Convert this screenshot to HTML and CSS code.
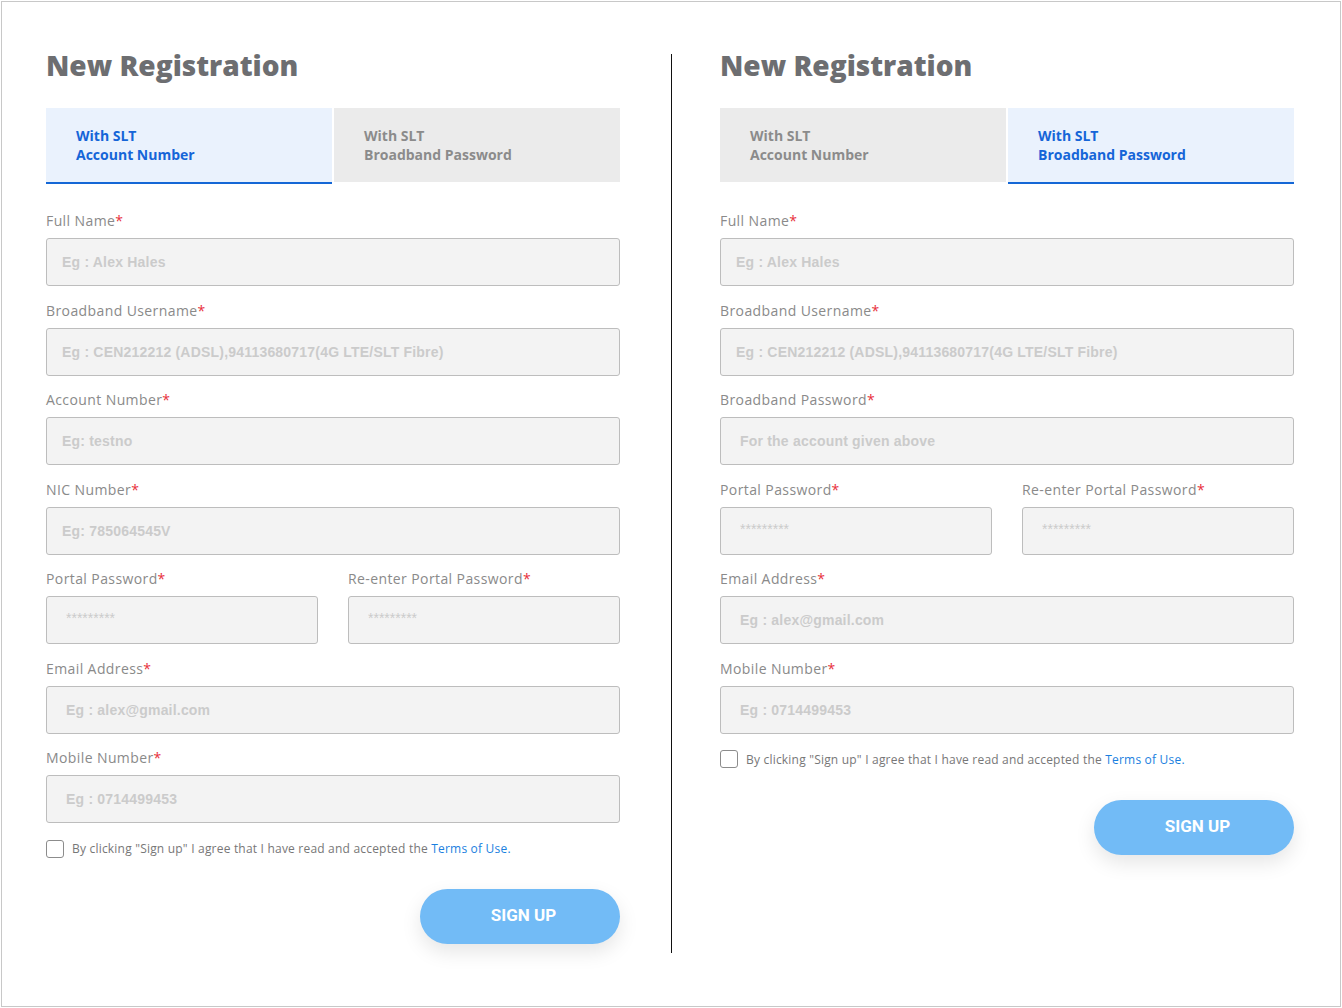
FILE: index.html
```html
<!DOCTYPE html>
<html>
<head>
<meta charset="utf-8">
<link rel="stylesheet" href="styles.css">
</head>
<body>
<div class="frame">
  <div class="cols">
    <section class="col">
      <h1 class="title">New Registration</h1>
      <div class="tabs">
        <div class="tab active">With SLT<br>Account Number</div>
        <div class="tab">With SLT<br>Broadband Password</div>
      </div>
      <div class="fields">
        <div class="field">
          <label class="lbl">Full Name<span class="req">*</span></label>
          <input class="inp" placeholder="Eg : Alex Hales">
        </div>
        <div class="field">
          <label class="lbl">Broadband Username<span class="req">*</span></label>
          <input class="inp" placeholder="Eg : CEN212212 (ADSL),94113680717(4G LTE/SLT Fibre)">
        </div>
        <div class="field">
          <label class="lbl">Account Number<span class="req">*</span></label>
          <input class="inp" placeholder="Eg: testno">
        </div>
        <div class="field">
          <label class="lbl">NIC Number<span class="req">*</span></label>
          <input class="inp" placeholder="Eg: 785064545V">
        </div>
        <div class="field row2">
          <div class="sub">
            <label class="lbl">Portal Password<span class="req">*</span></label>
            <input class="inp pw" placeholder="*********">
          </div>
          <div class="sub">
            <label class="lbl">Re-enter Portal Password<span class="req">*</span></label>
            <input class="inp pw" placeholder="*********">
          </div>
        </div>
        <div class="field">
          <label class="lbl">Email Address<span class="req">*</span></label>
          <input class="inp wide" placeholder="Eg : alex@gmail.com">
        </div>
        <div class="field">
          <label class="lbl">Mobile Number<span class="req">*</span></label>
          <input class="inp wide" placeholder="Eg : 0714499453">
        </div>
      </div>
      <div class="agree">
        <span class="box"></span>
        <span class="agree-text">By clicking "Sign up" I agree that I have read and accepted the <a class="terms">Terms of Use.</a></span>
      </div>
      <div class="actions">
        <button class="btn">SIGN UP</button>
      </div>
    </section>

    <div class="divider"></div>

    <section class="col">
      <h1 class="title">New Registration</h1>
      <div class="tabs">
        <div class="tab">With SLT<br>Account Number</div>
        <div class="tab active">With SLT<br>Broadband Password</div>
      </div>
      <div class="fields">
        <div class="field">
          <label class="lbl">Full Name<span class="req">*</span></label>
          <input class="inp" placeholder="Eg : Alex Hales">
        </div>
        <div class="field">
          <label class="lbl">Broadband Username<span class="req">*</span></label>
          <input class="inp" placeholder="Eg : CEN212212 (ADSL),94113680717(4G LTE/SLT Fibre)">
        </div>
        <div class="field">
          <label class="lbl">Broadband Password<span class="req">*</span></label>
          <input class="inp wide" placeholder="For the account given above">
        </div>
        <div class="field row2">
          <div class="sub">
            <label class="lbl">Portal Password<span class="req">*</span></label>
            <input class="inp pw" placeholder="*********">
          </div>
          <div class="sub">
            <label class="lbl">Re-enter Portal Password<span class="req">*</span></label>
            <input class="inp pw" placeholder="*********">
          </div>
        </div>
        <div class="field">
          <label class="lbl">Email Address<span class="req">*</span></label>
          <input class="inp wide" placeholder="Eg : alex@gmail.com">
        </div>
        <div class="field">
          <label class="lbl">Mobile Number<span class="req">*</span></label>
          <input class="inp wide" placeholder="Eg : 0714499453">
        </div>
      </div>
      <div class="agree">
        <span class="box"></span>
        <span class="agree-text">By clicking "Sign up" I agree that I have read and accepted the <a class="terms">Terms of Use.</a></span>
      </div>
      <div class="actions">
        <button class="btn">SIGN UP</button>
      </div>
    </section>
  </div>
</div>
</body>
</html>
```

FILE: styles.css
```css
* { box-sizing: border-box; }
html, body { margin: 0; padding: 0; background: #fff; }
body { font-family: "Open Sans", "Liberation Sans", sans-serif; }

.frame {
  margin: 1px;
  width: 1340px;
  height: 1006px;
  border: 1px solid #c8c8c8;
  overflow: hidden;
}

.cols {
  display: flex;
  align-items: flex-start;
  padding: 44px 0 0 44px;
}

.col {
  width: 574px;
  flex: none;
}

.divider {
  width: 1px;
  height: 899px;
  margin: 8px 48px 0 51px;
  background: #111;
  flex: none;
}

.title {
  margin: 0;
  font-size: 28px;
  line-height: 38px;
  font-weight: 800;
  color: #6d6e71;
}

.tabs {
  display: flex;
  gap: 2px;
  margin-top: 24px;
}

.tab {
  flex: 1;
  height: 76px;
  padding-left: 30px;
  display: flex;
  align-items: center;
  font-size: 14px;
  line-height: 19px;
  font-weight: 700;
  color: #8b8b8b;
  background: #ebebeb;
  border-bottom: 2px solid transparent;
  background-clip: padding-box;
}

.tab.active {
  background: #eaf2fd;
  color: #1565d8;
  border-bottom-color: #1467d6;
}

.fields {
  margin-top: 26px;
  display: flex;
  flex-direction: column;
  gap: 13.5px;
}

.field { display: flex; flex-direction: column; }

.row2 {
  flex-direction: row;
  gap: 30px;
}

.sub { flex: 1; display: flex; flex-direction: column; }

.lbl {
  font-size: 14px;
  line-height: 20px;
  letter-spacing: 0.4px;
  color: #8a8a8a;
  padding-top: 1px;
  margin-bottom: 7px;
}

.req { color: #e8303a; }

.inp {
  height: 48px;
  width: 100%;
  border: 1px solid #bdbdbd;
  border-radius: 3px;
  background: #f3f3f3;
  padding: 0 15px;
  font-family: "Liberation Sans", Arial, sans-serif;
  font-size: 14px;
  font-weight: 700;
  letter-spacing: 0.2px;
  color: #555;
  outline: none;
}

.inp::placeholder { color: #cbcbcb; }
.inp.wide { padding-left: 19px; }
.inp.pw { padding-left: 19px; font-size: 14px; font-weight: 400; letter-spacing: 0; padding-bottom: 4px; }

.agree {
  display: flex;
  align-items: center;
  margin-top: 16px;
}

.box {
  width: 18px;
  height: 18px;
  border: 1px solid #8c8c8c;
  border-radius: 3px;
  flex: none;
}

.agree-text {
  margin-left: 8px;
  font-size: 12px;
  line-height: 18px;
  letter-spacing: 0.2px;
  color: #777;
  padding-top: 1px;
}

.terms { color: #1a7fe0; text-decoration: none; }

.actions {
  display: flex;
  justify-content: flex-end;
  margin-top: 31px;
}

.btn {
  width: 200px;
  height: 55px;
  border: none;
  border-radius: 28px;
  background: #72bbf6;
  color: #fff;
  font-family: Roboto, "Liberation Sans", sans-serif;
  font-size: 17px;
  font-weight: 700;
  padding: 0 0 3px 7px;
  box-shadow: 0 8px 20px rgba(0, 0, 0, 0.10);
}
```
